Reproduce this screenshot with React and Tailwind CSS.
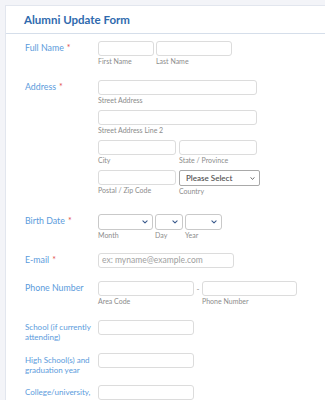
import React from 'react'

const font = { fontFamily: 'Lato, "Noto Sans", sans-serif' }

// small chevron used inside the selects
const Chevron = ({ className }) => (
  <svg viewBox="0 0 10 6" className={className} fill="none">
    <path d="M1.5 1.2 5 4.6 8.5 1.2" stroke="currentColor" strokeWidth="1.8" strokeLinecap="round" strokeLinejoin="round" />
  </svg>
)

// label lines are given explicitly so the wrapping matches the form
const Label = ({ lines, req, small }) => (
  <div className={`w-[73px] shrink-0 pt-[2px] leading-[10px] text-[#5b9bdc] ${small ? 'text-[8px]' : 'text-[8.8px]'}`}>
    {lines.map((l, i) => (
      <div key={i} className="whitespace-nowrap">
        {l}
        {req && i === lines.length - 1 && <span className="ml-[3px] text-[#e25050]">*</span>}
      </div>
    ))}
  </div>
)

const Sub = ({ children }) => (
  <div className="mt-[1px] text-[7px] leading-[9px] text-[#8c8c8c]">{children}</div>
)

const Box = ({ w, placeholder }) => (
  <div className={`${w} h-[15px] rounded-[3px] border border-[#dcdcdc] bg-white flex items-center px-[3px] text-[8.5px] text-[#a0a0a0]`}>
    {placeholder}
  </div>
)

const Field = ({ w, sub, placeholder }) => (
  <div>
    <Box w={w} placeholder={placeholder} />
    {sub && <Sub>{sub}</Sub>}
  </div>
)

const DateSelect = ({ w, sub }) => (
  <div>
    <div className={`${w} h-[16px] rounded-[3px] border border-[#c9c9c9] bg-white flex items-center justify-end pr-[4px]`}>
      <Chevron className="w-[6px] h-[4px] text-[#3a5a8c]" />
    </div>
    <Sub>{sub}</Sub>
  </div>
)

export default function App() {
  return (
    <div className="w-[325px] h-[400px] overflow-hidden bg-[#f3f4f8] pt-[5px] pl-[5px]" style={font}>
      <div className="w-[340px] h-[420px] bg-white border border-[#e2e6ee]">
        <div className="pt-[7px] pb-[6px] pl-[18px] border-b border-[#d5deea]">
          <div className="text-[11.5px] leading-[14px] font-bold text-[#2f6aae]">Alumni Update Form</div>
        </div>

        <div className="pl-[19px] pt-[7px]">
          {/* Full name */}
          <div className="flex items-start">
            <Label req lines={['Full Name']} />
            <div className="flex gap-[2px]">
              <Field w="w-[56px]" sub="First Name" />
              <Field w="w-[76px]" sub="Last Name" />
            </div>
          </div>

          {/* Address */}
          <div className="flex items-start mt-[14px]">
            <Label req lines={['Address']} />
            <div className="flex flex-col gap-[5px]">
              <Field w="w-[159px]" sub="Street Address" />
              <Field w="w-[159px]" sub="Street Address Line 2" />
              <div className="flex gap-[3px]">
                <Field w="w-[78px]" sub="City" />
                <Field w="w-[78px]" sub="State / Province" />
              </div>
              <div className="flex gap-[3px]">
                <Field w="w-[78px]" sub="Postal / Zip Code" />
                <div>
                  <div className="w-[81px] h-[16px] rounded-[2px] border border-[#a9a9a9] bg-white flex items-center justify-between pl-[6px] pr-[4px]">
                    <span className="text-[8px] font-semibold text-[#555]">Please Select</span>
                    <Chevron className="w-[5px] h-[3px] text-[#555]" />
                  </div>
                  <Sub>Country</Sub>
                </div>
              </div>
            </div>
          </div>

          {/* Birth date */}
          <div className="flex items-start mt-[18px]">
            <Label req lines={['Birth Date']} />
            <div className="flex gap-[2px]">
              <DateSelect w="w-[55px]" sub="Month" />
              <DateSelect w="w-[28px]" sub="Day" />
              <DateSelect w="w-[37px]" sub="Year" />
            </div>
          </div>

          {/* Email */}
          <div className="flex items-start mt-[13px]">
            <Label req lines={['E-mail']} />
            <Box w="w-[136px]" placeholder="ex: myname@example.com" />
          </div>

          {/* Phone */}
          <div className="flex items-start mt-[13px]">
            <Label lines={['Phone Number']} />
            <div className="flex items-start">
              <Field w="w-[96px]" sub="Area Code" />
              <div className="w-[8px] h-[15px] flex items-center justify-center text-[8px] text-[#888]">-</div>
              <Field w="w-[95px]" sub="Phone Number" />
            </div>
          </div>

          {/* School */}
          <div className="flex items-start mt-[14px]">
            <Label small lines={['School (if currently', 'attending)']} />
            <Box w="w-[96px]" />
          </div>

          <div className="flex items-start mt-[11px]">
            <Label small lines={['High School(s) and', 'graduation year']} />
            <Box w="w-[96px]" />
          </div>

          <div className="flex items-start mt-[10px]">
            <Label small lines={['College/university,']} />
            <Box w="w-[96px]" />
          </div>
        </div>
      </div>
    </div>
  )
}
